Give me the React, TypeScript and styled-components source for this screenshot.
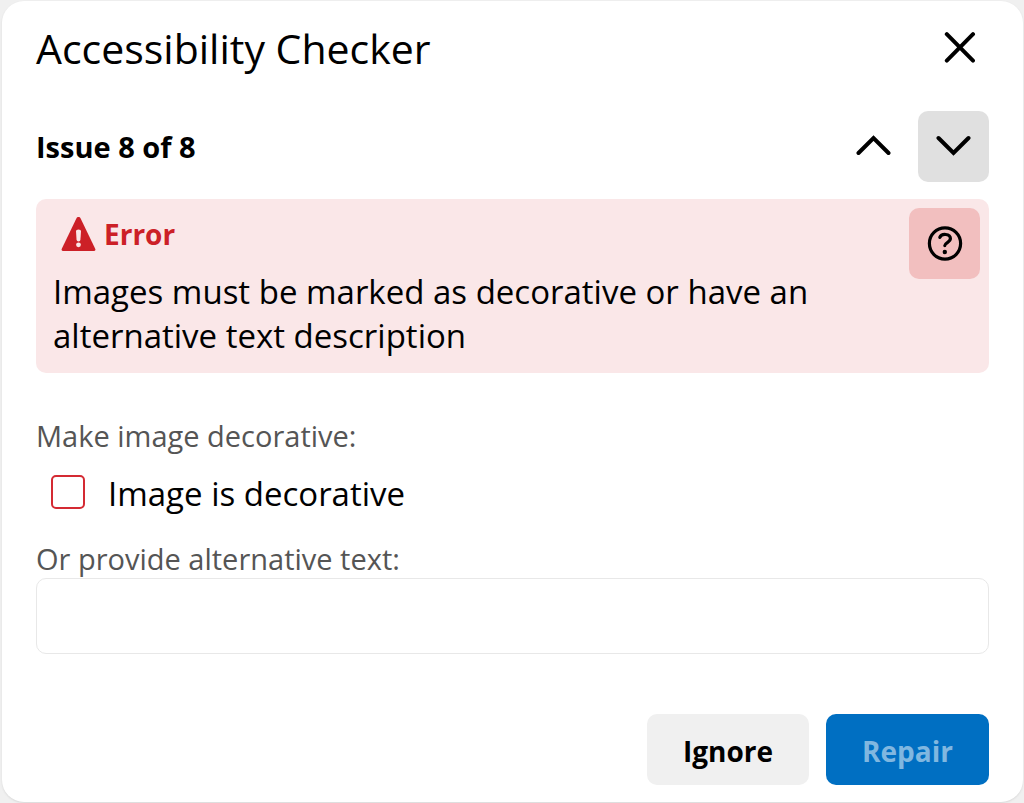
import React, { useState } from 'react';
import styled, { createGlobalStyle } from 'styled-components';

const GlobalStyle = createGlobalStyle`
  *, *::before, *::after { box-sizing: border-box; }
  body {
    margin: 0;
    background: #f0f0f0;
    color: #000;
    font-family: 'Open Sans', 'Noto Sans', sans-serif;
  }
  button, input { font: inherit; color: inherit; }
`;

const Dialog = styled.section`
  margin: 1px 1px 1px 2px;
  padding: 8px 34px 17px;
  background: #fff;
  border-radius: 22px;
  box-shadow: 0 1px 2px 0 #d8d8d8;
`;

const Header = styled.header`
  display: flex;
  align-items: center;
  justify-content: space-between;
  height: 78px;
`;

const Title = styled.h1`
  margin: 0;
  font-size: 41px;
  font-weight: 400;
  line-height: 56px;
`;

const IconButton = styled.button<{ $background?: string }>`
  display: flex;
  flex: none;
  align-items: center;
  justify-content: center;
  width: 71px;
  height: 71px;
  padding: 0;
  border: 0;
  border-radius: 10px;
  background: ${({ $background }) => $background ?? 'transparent'};
  cursor: pointer;
`;

const CloseButton = styled(IconButton)`
  width: 58px;
  height: 58px;
`;

const IssueBar = styled.div`
  display: flex;
  align-items: center;
  gap: 9px;
  margin-top: 24px;
`;

const IssueCount = styled.h2`
  flex: 1;
  margin: 0;
  font-size: 29px;
  font-weight: 700;
  line-height: 40px;
`;

const Alert = styled.div`
  display: flex;
  align-items: flex-start;
  margin-top: 17px;
  padding: 9px 9px 15px 17px;
  border-radius: 10px;
  background: #fae7e8;
`;

const AlertBody = styled.div`
  flex: 1;
`;

const Severity = styled.strong`
  display: flex;
  align-items: center;
  gap: 8px;
  height: 52px;
  padding-left: 8px;
  color: #cc2027;
  font-size: 28px;
  line-height: 40px;
`;

const Message = styled.p`
  margin: 10px 0 0;
  font-size: 33px;
  line-height: 44px;
`;

const Form = styled.form`
  display: flex;
  flex-direction: column;
  margin-top: 44px;
`;

const Group = styled.fieldset`
  min-width: 0;
  margin: 0 0 24px;
  padding: 0;
  border: 0;
`;

const captionText = `
  padding: 0;
  color: #555;
  font-size: 29px;
  line-height: 38px;
`;

const Legend = styled.legend`
  ${captionText}
`;

const FieldLabel = styled.label`
  ${captionText}
`;

const CheckRow = styled.div`
  display: flex;
  align-items: center;
  margin-top: 13px;
  padding-left: 15px;
`;

const CheckLabel = styled.label`
  padding: 4px 0 0 23px;
  font-size: 33px;
  line-height: 44px;
`;

const Checkbox = styled.input`
  appearance: none;
  flex: none;
  width: 34px;
  height: 34px;
  margin: 0;
  border: 2px solid #d42a33;
  border-radius: 5px;
  background: #fff;
  &:checked { background: #cc2027; box-shadow: inset 0 0 0 5px #fff; }
`;

const TextInput = styled.input`
  width: 100%;
  height: 76px;
  padding: 0 17px;
  border: 1px solid #e8e8e8;
  border-radius: 10px;
  background: #fff;
  font-size: 33px;
`;

const Actions = styled.footer`
  display: flex;
  justify-content: flex-end;
  gap: 17px;
  margin-top: 60px;
`;

const ActionButton = styled.button<{ $primary?: boolean }>`
  height: 71px;
  padding: 3px 36px 0;
  border: 0;
  border-radius: 10px;
  background: ${({ $primary }) => ($primary ? '#006fc2' : '#f0f0f0')};
  color: ${({ $primary }) => ($primary ? '#fff' : '#000')};
  font-size: 28px;
  font-weight: 700;
  line-height: 40px;
  &:disabled { color: #80b7e0; }
`;

const CloseIcon = () => (
  <svg width="32" height="32" viewBox="0 0 32 32" fill="none" stroke="#000" strokeWidth="4" strokeLinecap="round" aria-hidden="true">
    <path d="M2.8 2.2 29 28.6M29 2.2 2.8 28.6" />
  </svg>
);

const ChevronIcon = ({ down = false }: { down?: boolean }) => (
  <svg width="36" height="24" viewBox="0 0 36 24" fill="none" stroke="#000" strokeWidth="4" strokeLinecap="round" aria-hidden="true">
    <path d={down ? 'M2.5 3 17.5 18 32.5 3' : 'M2.5 18 17.5 3 32.5 18'} />
  </svg>
);

const HelpIcon = () => (
  <svg width="36" height="36" viewBox="0 0 36 36" fill="none" stroke="#000" strokeLinecap="round" aria-hidden="true">
    <circle cx="18" cy="17.5" r="15.6" strokeWidth="3.2" />
    <path d="M12.8 11.4C14.4 7.2 23.4 7.4 23.4 12.6C23.4 16.4 17.8 16.6 17.8 19.6" strokeWidth="3.2" />
    <circle cx="17.8" cy="26" r="2.2" fill="#000" stroke="none" />
  </svg>
);

const WarningIcon = () => (
  <svg width="35" height="35" viewBox="0 1 35 35" aria-hidden="true">
    <path d="M15.6 1.9Q17.5-.1 19.4 1.9L34.2 32.7Q35 34.9 32.8 35H2.2Q0 34.9.8 32.7Z" fill="#cc2027" />
    <path d="M15 15Q15 13.4 17.5 13.4T20 15L19.4 24Q19.2 25.4 17.5 25.4T15.6 24Z" fill="#fae7e8" />
    <circle cx="17.5" cy="28.8" r="2.4" fill="#fae7e8" />
  </svg>
);

export default function App() {
  const [decorative, setDecorative] = useState(false);
  const [altText, setAltText] = useState('');

  return (
    <>
      <GlobalStyle />
      <Dialog role="dialog" aria-labelledby="checker-title">
        <Header>
          <Title id="checker-title">Accessibility Checker</Title>
          <CloseButton type="button" aria-label="Close"><CloseIcon /></CloseButton>
        </Header>
        <IssueBar>
          <IssueCount>Issue 8 of 8</IssueCount>
          <IconButton type="button" aria-label="Previous issue"><ChevronIcon /></IconButton>
          <IconButton type="button" aria-label="Next issue" $background="#e0e0e0"><ChevronIcon down /></IconButton>
        </IssueBar>
        <Alert>
          <AlertBody>
            <Severity><WarningIcon />Error</Severity>
            <Message>Images must be marked as decorative or have an alternative text description</Message>
          </AlertBody>
          <IconButton type="button" aria-label="Help" $background="#f2bfbf"><HelpIcon /></IconButton>
        </Alert>
        <Form onSubmit={(event) => event.preventDefault()}>
          <Group>
            <Legend>Make image decorative:</Legend>
            <CheckRow>
              <Checkbox id="decorative" type="checkbox" checked={decorative} onChange={(event) => setDecorative(event.target.checked)} />
              <CheckLabel htmlFor="decorative">Image is decorative</CheckLabel>
            </CheckRow>
          </Group>
          <FieldLabel htmlFor="alt-text">Or provide alternative text:</FieldLabel>
          <TextInput id="alt-text" type="text" value={altText} onChange={(event) => setAltText(event.target.value)} />
          <Actions>
            <ActionButton type="button">Ignore</ActionButton>
            <ActionButton type="submit" $primary disabled={!decorative && altText === ''}>Repair</ActionButton>
          </Actions>
        </Form>
      </Dialog>
    </>
  );
}
